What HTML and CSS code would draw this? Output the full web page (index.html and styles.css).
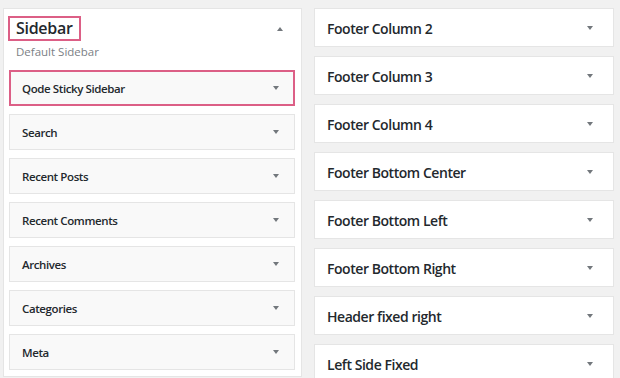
FILE: index.html
```html
<!DOCTYPE html>
<html>
<head>
<meta charset="utf-8">
<link rel="stylesheet" href="styles.css">
</head>
<body>
<div class="page">
  <div class="sidebar-panel">
    <div class="panel-head">
      <div class="panel-title">Sidebar</div>
      <span class="arrow up"></span>
    </div>
    <div class="panel-desc">Default Sidebar</div>
    <div class="widgets">
      <div class="widget highlighted"><span class="widget-name">Qode Sticky Sidebar</span><span class="arrow down"></span></div>
      <div class="widget"><span class="widget-name">Search</span><span class="arrow down"></span></div>
      <div class="widget"><span class="widget-name">Recent Posts</span><span class="arrow down"></span></div>
      <div class="widget"><span class="widget-name">Recent Comments</span><span class="arrow down"></span></div>
      <div class="widget"><span class="widget-name">Archives</span><span class="arrow down"></span></div>
      <div class="widget"><span class="widget-name">Categories</span><span class="arrow down"></span></div>
      <div class="widget"><span class="widget-name">Meta</span><span class="arrow down"></span></div>
    </div>
  </div>
  <div class="area-list">
    <div class="area"><span class="area-name">Footer Column 2</span><span class="arrow down"></span></div>
    <div class="area"><span class="area-name">Footer Column 3</span><span class="arrow down"></span></div>
    <div class="area"><span class="area-name">Footer Column 4</span><span class="arrow down"></span></div>
    <div class="area"><span class="area-name">Footer Bottom Center</span><span class="arrow down"></span></div>
    <div class="area"><span class="area-name">Footer Bottom Left</span><span class="arrow down"></span></div>
    <div class="area"><span class="area-name">Footer Bottom Right</span><span class="arrow down"></span></div>
    <div class="area"><span class="area-name">Header fixed right</span><span class="arrow down"></span></div>
    <div class="area"><span class="area-name">Left Side Fixed</span><span class="arrow down"></span></div>
  </div>
</div>
</body>
</html>
```
FILE: styles.css
```css
html, body {
  margin: 0;
  padding: 0;
  background: #f1f1f1;
  font-family: "Open Sans", "Noto Sans", sans-serif;
  color: #23282d;
  overflow: hidden;
}
.page {
  display: flex;
  align-items: flex-start;
  gap: 12px;
  padding: 8px 0 0 3px;
  height: 378px;
  box-sizing: border-box;
}
.sidebar-panel {
  width: 299px;
  box-sizing: border-box;
  background: #fff;
  border: 1px solid #e5e5e5;
  padding: 7px 6px 6px 5px;
}
.panel-head {
  display: flex;
  align-items: center;
  justify-content: space-between;
  padding-right: 12px;
}
.panel-title {
  margin-left: -1px;
  height: 25px;
  box-sizing: border-box;
  border: 2px solid #dc5f86;
  padding: 0 6px 0 6px;
  font-size: 16px;
  font-weight: 600;
  line-height: 21px;
  letter-spacing: -0.3px;
}
.panel-desc {
  margin: 3px 0 0 7px;
  height: 16px;
  font-size: 11.5px;
  line-height: 16px;
  color: #7b8085;
}
.widgets {
  margin-top: 10px;
  display: flex;
  flex-direction: column;
  gap: 8px;
}
.widget {
  height: 36px;
  box-sizing: border-box;
  border: 1px solid #e5e5e5;
  background: #f9f9f9;
  display: flex;
  align-items: center;
  justify-content: space-between;
  padding: 0 15px 0 12px;
}
.widget.highlighted {
  border: 2px solid #dc5f86;
  padding: 0 14px 0 11px;
}
.widget-name {
  font-size: 11.5px;
  font-weight: 600;
  letter-spacing: -0.4px;
  color: #23282d;
}
.area-list {
  width: 300px;
  display: flex;
  flex-direction: column;
  gap: 9px;
}
.area {
  height: 39px;
  box-sizing: border-box;
  background: #fff;
  border: 1px solid #e5e5e5;
  display: flex;
  align-items: center;
  justify-content: space-between;
  padding: 1px 20px 0 12px;
}
.area-name {
  font-size: 14px;
  font-weight: 600;
  letter-spacing: -0.45px;
  color: #23282d;
}
.arrow {
  width: 0;
  height: 0;
  border-left: 3.5px solid transparent;
  border-right: 3.5px solid transparent;
}
.arrow.down {
  border-top: 4.5px solid #72777c;
}
.arrow.up {
  border-bottom: 4.5px solid #72777c;
}
```
